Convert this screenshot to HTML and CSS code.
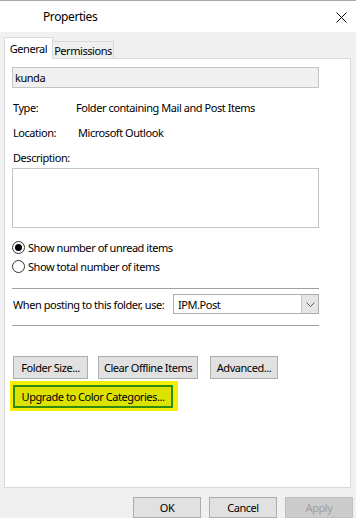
FILE: index.html
```html
<!DOCTYPE html>
<html>
<head>
<meta charset="utf-8">
<link rel="stylesheet" href="styles.css">
</head>
<body>
<div class="window">
  <div class="titlebar">
    <span class="title">Properties</span>
    <svg class="close" width="11" height="11" viewBox="0 0 11 11"><path d="M0.5 0.5 L10.5 10.5 M10.5 0.5 L0.5 10.5" stroke="#000" stroke-width="1" fill="none"/></svg>
  </div>
  <div class="content">
    <div class="tabs">
      <div class="tab tab-active">General</div>
      <div class="tab">Permissions</div>
    </div>
    <div class="panel">
      <div class="namebox">kunda</div>
      <div class="row row-type"><span class="label label-type">Type:</span><span>Folder containing Mail and Post Items</span></div>
      <div class="row row-loc"><span class="label label-loc">Location:</span><span>Microsoft Outlook</span></div>
      <div class="row row-desc"><span>Description:</span></div>
      <div class="textarea"></div>
      <div class="radio-row radio-first"><span class="radio radio-on"></span><span>Show number of unread items</span></div>
      <div class="radio-row"><span class="radio"></span><span>Show total number of items</span></div>
      <div class="sep sep-first"></div>
      <div class="post-row">
        <span class="post-label">When posting to this folder, use:</span>
        <div class="combo">
          <span class="combo-text">IPM.Post</span>
          <span class="combo-btn"><svg width="9" height="5" viewBox="0 0 9 5"><path d="M0.5 0.5 L4.5 4.5 L8.5 0.5" stroke="#606060" stroke-width="1" fill="none"/></svg></span>
        </div>
      </div>
      <div class="sep sep-second"></div>
      <div class="btn-row">
        <div class="btn btn-size">Folder Size...</div>
        <div class="btn btn-clear">Clear Offline Items</div>
        <div class="btn btn-adv">Advanced...</div>
      </div>
      <div class="highlight">
        <div class="btn btn-upgrade">Upgrade to Color Categories...</div>
      </div>
    </div>
    <div class="footer">
      <div class="btn fbtn">OK</div>
      <div class="btn fbtn">Cancel</div>
      <div class="btn fbtn fbtn-disabled">Apply</div>
    </div>
  </div>
</div>
</body>
</html>
```

FILE: styles.css
```css
* { box-sizing: border-box; }
html, body { margin: 0; padding: 0; }
body {
  font-family: "Noto Sans", "DejaVu Sans", sans-serif;
  font-size: 11px;
  letter-spacing: -0.45px;
  color: #000;
  background: #f0f0f0;
  white-space: nowrap;
}
.window {
  width: 356px;
  height: 518px;
  background: #f0f0f0;
  border-top: 1px solid #a8a8a8;
  overflow: hidden;
}
.titlebar {
  height: 31px;
  background: #fff;
  display: flex;
  align-items: center;
  padding-left: 43px;
  padding-right: 9px;
}
.title {
  font-size: 12px;
  letter-spacing: -0.4px;
  flex: 1;
  margin-top: -1px;
}
.close { display: block; margin-top: 1px; }
.content {
  padding: 5px 5px 0 4px;
}
.tabs {
  display: flex;
  align-items: flex-end;
  height: 21px;
  position: relative;
  z-index: 1;
}
.tab {
  height: 17px;
  border: 1px solid #d9d9d9;
  border-bottom: none;
  background: #f0f0f0;
  display: flex;
  align-items: center;
  margin-left: -1px;
  width: 62px;
  justify-content: center;
}
.tab-active {
  background: #fff;
  width: 49px;
  margin-left: 0;
  margin-bottom: -1px;
  height: 22px;
  padding-bottom: 1px;
}
.panel {
  background: #fff;
  border: 1px solid #d9d9d9;
  height: 430px;
  padding: 8px 0 0 7px;
}
.namebox {
  width: 307px;
  height: 21px;
  background: #f0f0f0;
  border: 1px solid #c4c4c4;
  display: flex;
  align-items: center;
  padding-left: 2px;
}
.row {
  display: flex;
  align-items: center;
  height: 16px;
  padding-left: 1px;
}
.row-type { margin-top: 11px; }
.row-loc { margin-top: 9px; }
.row-desc { margin-top: 9px; }
.label-type { width: 63px; }
.label-loc { width: 65px; }
.textarea {
  margin-top: 3px;
  width: 307px;
  height: 60px;
  border: 1px solid #c4c4c4;
  background: #fff;
}
.radio-row {
  display: flex;
  align-items: center;
  height: 16px;
  gap: 3px;
  margin-top: 3px;
}
.radio-first { margin-top: 11px; }
.radio {
  width: 13px;
  height: 13px;
  border-radius: 50%;
  border: 1px solid #333;
  background: #fff;
  display: flex;
  align-items: center;
  justify-content: center;
}
.radio-on::after {
  content: "";
  width: 7px;
  height: 7px;
  border-radius: 50%;
  background: #000;
}
.sep {
  width: 307px;
  height: 1px;
  background: #a0a0a0;
}
.sep-first { margin-top: 14px; }
.sep-second { margin-top: 11px; }
.post-row {
  display: flex;
  align-items: center;
  margin-top: 5px;
  width: 307px;
}
.post-label { width: 161px; padding-left: 1px; }
.combo {
  flex: 1;
  height: 20px;
  border: 1px solid #adadad;
  background: #fff;
  display: flex;
  align-items: center;
  padding-left: 4px;
}
.combo-text { flex: 1; }
.combo-btn {
  width: 17px;
  height: 18px;
  background: #e5e5e5;
  border-left: 1px solid #c8c8c8;
  display: flex;
  align-items: center;
  justify-content: center;
}
.btn {
  height: 23px;
  border: 1px solid #adadad;
  background: #e1e1e1;
  display: flex;
  align-items: center;
  justify-content: center;
}
.btn-row {
  display: flex;
  margin-top: 30px;
  padding-left: 1px;
}
.btn-size { width: 75px; }
.btn-clear { width: 100px; margin-left: 10px; }
.btn-adv { width: 68px; margin-left: 12px; }
.highlight {
  margin-top: 2px;
  margin-left: -2px;
  width: 168px;
  height: 30px;
  background: #f4ee00;
  padding: 4px 0 0 3px;
}
.btn-upgrade {
  width: 160px;
  height: 23px;
  background: #dde300;
  border: 2px solid #2f8a10;
}
.footer {
  display: flex;
  justify-content: flex-end;
  gap: 8px;
  margin-top: 9px;
  margin-right: -2px;
}
.fbtn { width: 68px; height: 21px; }
.fbtn-disabled {
  background: #cccccc;
  border-color: #bfbfbf;
  color: #a0a0a0;
}
```
